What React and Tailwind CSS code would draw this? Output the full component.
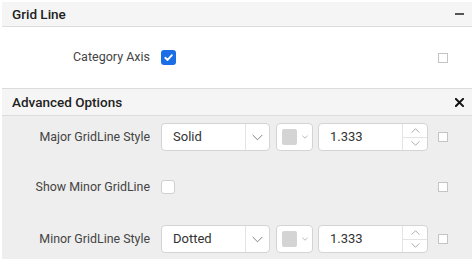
import React from "react";

const font = { fontFamily: "Roboto, 'Noto Sans', sans-serif" };

function Chevron({ className = "", up = false }) {
  return (
    <svg className={className} viewBox="0 0 12 7" fill="none" stroke="currentColor" strokeWidth="1" strokeLinecap="round" strokeLinejoin="round">
      {up ? <path d="M1 6 L6 1 L11 6" /> : <path d="M1 1 L6 6 L11 1" />}
    </svg>
  );
}

function SmallBox() {
  return <div className="w-[10px] h-[10px] border border-[#c4c4c4] bg-white" />;
}

function Select({ value }) {
  return (
    <div className="flex h-[28px] w-[109px] items-stretch rounded-[4px] border border-[#d4d4d4] bg-white">
      <div className="flex flex-1 items-center pl-[11px] text-[13px] text-[#333]">{value}</div>
      <div className="flex w-[24px] items-center justify-center border-l border-[#e4e4e4] text-[#777]">
        <Chevron className="w-[11px] h-[7px]" />
      </div>
    </div>
  );
}

function ColorPicker() {
  return (
    <div className="ml-[6px] flex h-[28px] w-[37px] items-center rounded-[4px] border border-[#d4d4d4] bg-white pl-[5px]">
      <div className="h-[16px] w-[15px] rounded-[2px] bg-[#d4d4d4]" />
      <Chevron className="ml-[5px] w-[6px] h-[4px] text-[#777]" />
    </div>
  );
}

function Numeric() {
  return (
    <div className="ml-[5px] flex h-[28px] w-[110px] items-stretch rounded-[4px] border border-[#d4d4d4] bg-white">
      <div className="flex flex-1 items-center pl-[11px] text-[13px] text-[#333]">1.333</div>
      <div className="flex w-[25px] flex-col border-l border-[#e4e4e4] text-[#888]">
        <div className="flex flex-1 items-center justify-center border-b border-[#e4e4e4]">
          <Chevron up className="w-[9px] h-[5px]" />
        </div>
        <div className="flex flex-1 items-center justify-center">
          <Chevron className="w-[9px] h-[5px]" />
        </div>
      </div>
    </div>
  );
}

function Row({ label, children, className = "" }) {
  return (
    <div className={`flex h-[28px] items-center ${className}`}>
      <div className="w-[148px] text-right text-[12.4px] text-[#444]">{label}</div>
      <div className="ml-[11px] flex w-[267px] items-center">{children}</div>
      <div className="ml-[10px]"><SmallBox /></div>
    </div>
  );
}

export default function App() {
  return (
    <div className="h-[262px] w-[474px] bg-white pl-[2px] pr-[2px] pt-[2px]" style={font}>
      <div className="flex h-[25px] items-center justify-between border-b border-[#dcdcdc] bg-[#f5f5f5] pl-[10px] pr-[8px]">
        <span className="text-[13.5px] font-medium text-[#222]">Grid Line</span>
        <div className="h-[2px] w-[9px] bg-[#555]" />
      </div>
      <div className="flex h-[62px] items-center border-b border-[#dcdcdc] bg-white">
        <div className="w-[148px] text-right text-[12.5px] text-[#444]">Category Axis</div>
        <div className="ml-[11px] flex w-[267px] items-center">
          <div className="flex h-[15px] w-[15px] items-center justify-center rounded-[3px] bg-[#1a6fe6]">
            <svg viewBox="0 0 12 12" className="h-[11px] w-[11px]" fill="none" stroke="white" strokeWidth="2" strokeLinecap="round" strokeLinejoin="round">
              <path d="M2.5 6.3 L5 8.7 L9.7 3.5" />
            </svg>
          </div>
        </div>
        <div className="ml-[10px]"><SmallBox /></div>
      </div>
      <div className="flex h-[27px] items-center justify-between border-b border-[#dcdcdc] bg-[#f5f5f5] pl-[10px] pr-[8px]">
        <span className="text-[13.5px] font-medium text-[#222]">Advanced Options</span>
        <svg viewBox="0 0 10 10" className="h-[9px] w-[9px]" fill="none" stroke="#111" strokeWidth="2.2" strokeLinecap="square">
          <path d="M1 1 L9 9 M9 1 L1 9" />
        </svg>
      </div>
      <div className="h-[143px] bg-[#eeeeee] pt-[7px]">
        <Row label="Major GridLine Style">
          <Select value="Solid" />
          <ColorPicker />
          <Numeric />
        </Row>
        <Row label="Show Minor GridLine" className="mt-[22px]">
          <div className="h-[14px] w-[14px] rounded-[3px] border border-[#cfcfcf] bg-white" />
        </Row>
        <Row label="Minor GridLine Style" className="mt-[24px]">
          <Select value="Dotted" />
          <ColorPicker />
          <Numeric />
        </Row>
      </div>
    </div>
  );
}
